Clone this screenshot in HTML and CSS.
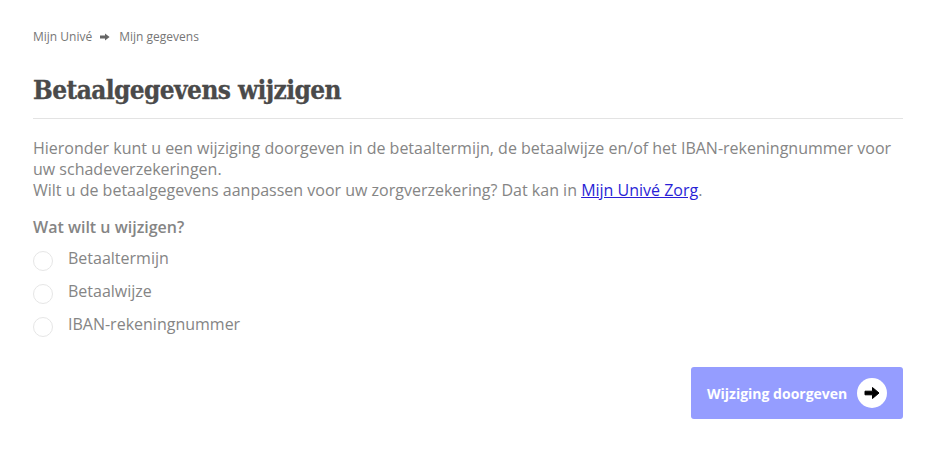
FILE: index.html
```html
<!DOCTYPE html>
<html lang="nl">
<head>
  <meta charset="UTF-8">
  <title>Betaalgegevens wijzigen</title>
  <link rel="stylesheet" href="styles.css">
</head>
<body>
<div class="page">
  <nav class="breadcrumb">
    <span>Mijn Univé</span>
    <svg class="crumb-arrow" viewBox="0 0 10 8" width="10" height="8"><path d="M0 2.6h5V0.6L9.6 4 5 7.4V5.4H0z" fill="#666"/></svg>
    <span>Mijn gegevens</span>
  </nav>

  <h1>Betaalgegevens wijzigen</h1>

  <p class="intro">
    Hieronder kunt u een wijziging doorgeven in de betaaltermijn, de betaalwijze en/of het IBAN-rekeningnummer voor uw schadeverzekeringen.<br>
    Wilt u de betaalgegevens aanpassen voor uw zorgverzekering? Dat kan in <a href="#">Mijn Univé Zorg</a>.
  </p>

  <div class="question">Wat wilt u wijzigen?</div>
  <div class="options">
    <label class="option"><span class="radio"></span>Betaaltermijn</label>
    <label class="option"><span class="radio"></span>Betaalwijze</label>
    <label class="option"><span class="radio"></span>IBAN-rekeningnummer</label>
  </div>

  <div class="actions">
    <button class="submit">
      Wijziging doorgeven
      <span class="submit-icon">
        <svg viewBox="0 0 16 14" width="16" height="14"><path d="M1 5.2h7.5V1.5L15 7l-6.5 5.5V8.8H1z" fill="#000" stroke="#000" stroke-linejoin="round"/></svg>
      </span>
    </button>
  </div>
</div>
</body>
</html>
```

FILE: styles.css
```css
* { box-sizing: border-box; }
body {
  margin: 0;
  background: #fff;
  color: #858585;
  font-family: "Open Sans", sans-serif;
  font-size: 16px;
}

.page {
  padding: 28px 30px 0 33px;
}

.breadcrumb {
  display: flex;
  align-items: center;
  gap: 8px;
  height: 17px;
  font-size: 12px;
  color: #767676;
}

.crumb-arrow { margin-right: 1px; }

h1 {
  margin: 26px 0 0;
  height: 48px;
  border-bottom: 1px solid #e3e3e3;
  font-family: "DejaVu Serif Condensed", "DejaVu Serif", serif;
  font-size: 26px;
  line-height: 38px;
  font-weight: bold;
  color: #4a4a4a;
  letter-spacing: -0.6px;
  -webkit-text-stroke: 0.3px #4a4a4a;
}

.intro {
  margin: 19px 0 0;
  line-height: 21px;
}

.intro a { color: #2a1fd6; }

.question {
  margin-top: 16px;
  line-height: 21px;
  font-weight: 600;
}

.options {
  display: flex;
  flex-direction: column;
  gap: 11px;
  margin-top: 9px;
}

.option {
  display: flex;
  align-items: flex-start;
  gap: 15px;
  height: 22px;
  line-height: 22px;
}

.radio {
  width: 20px;
  height: 20px;
  margin-top: 4px;
  border: 1px solid #e6e6e6;
  border-radius: 50%;
  background: #fff;
}

.actions {
  display: flex;
  justify-content: flex-end;
  margin-top: 32px;
}

.submit {
  display: flex;
  align-items: center;
  justify-content: space-between;
  width: 212px;
  height: 52px;
  padding: 0 16px;
  border: none;
  border-radius: 3px;
  background: #959dff;
  color: #fff;
  font-family: "Open Sans", sans-serif;
  font-size: 14px;
  font-weight: 700;
}

.submit-icon {
  display: flex;
  align-items: center;
  justify-content: center;
  width: 30px;
  height: 30px;
  border-radius: 50%;
  background: #fff;
}
```
